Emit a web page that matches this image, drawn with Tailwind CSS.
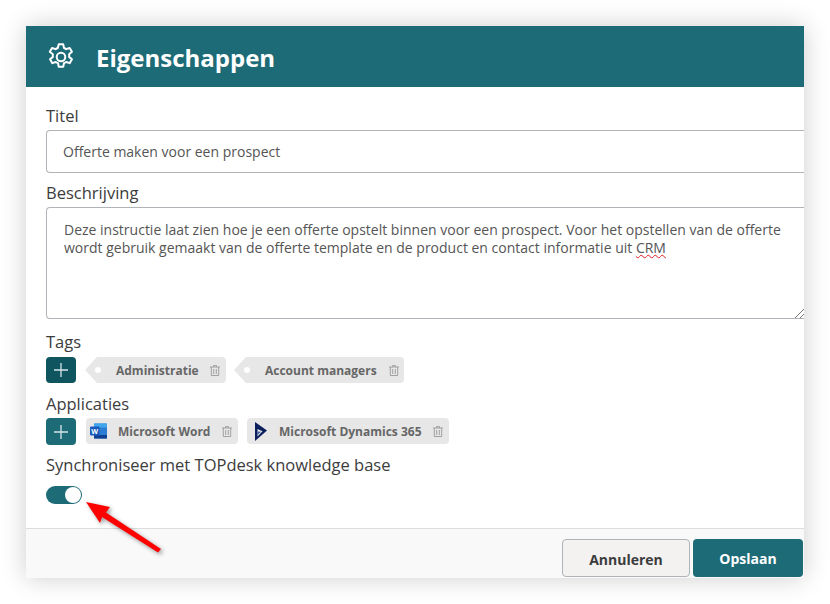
<!DOCTYPE html>
<html lang="en">
<head>
  <meta charset="UTF-8" />
  <title>Eigenschappen</title>
  <script src="https://cdn.jsdelivr.net/npm/@tailwindcss/browser@4"></script>
</head>
<body class="bg-white h-[604px] w-[830px] overflow-hidden relative font-['Open_Sans',sans-serif] text-[#3c3c3c]">
  <div class="absolute left-[26px] top-[26px] w-[778px] h-[552px] bg-white shadow-[0_0_24px_rgba(0,0,0,0.2)] flex flex-col overflow-hidden">
    <!-- header -->
    <div class="h-[61px] shrink-0 bg-[#1e6b78] flex items-center pl-[19px] text-white">
      <svg class="w-[32px] h-[32px]" viewBox="0 0 24 24" fill="none" stroke="currentColor" stroke-width="1.500" stroke-linecap="round" stroke-linejoin="round">
        <path d="M10.300 2.500h3.400l.5 2.700c.6.2 1.200.5 1.700.9l2.600-.9 1.700 2.900-2.100 1.800a7 7 0 0 1 0 2l2.100 1.800-1.700 2.900-2.600-.9c-.5.4-1.100.7-1.700.9l-.5 2.700h-3.400l-.5-2.700c-.6-.2-1.200-.5-1.700-.9l-2.600.9-1.700-2.900 2.100-1.800a7 7 0 0 1 0-2L3.600 8.100l1.700-2.900 2.600.9c.5-.4 1.100-.7 1.700-.9z" />
        <circle cx="12" cy="12" r="3.200" />
      </svg>
      <h1 class="ml-[19px] mt-[3px] text-[24px] font-bold leading-none">Eigenschappen</h1>
    </div>

    <!-- body -->
    <div class="flex-1 pl-[20px] pt-[17px]">
      <label class="block text-[16.500px] leading-[24px] h-[26px]">Titel</label>
      <div class="h-[43px] border border-[#b0b4b8] border-r-0 rounded-l-[4px] pl-[16px] flex items-center text-[14px] text-[#555]">Offerte maken voor een prospect</div>

      <label class="block text-[16.500px] leading-[24px] h-[26px] mt-[8px]">Beschrijving</label>
      <div class="relative h-[112px] border border-[#b0b4b8] border-r-0 rounded-l-[4px] pl-[17px] pr-[20px] pt-[13px] text-[14px] leading-[18px] text-[#555]">
        Deze instructie laat zien hoe je een offerte opstelt binnen voor een prospect. Voor het opstellen van de offerte wordt gebruik gemaakt van de offerte template en de product en contact informatie uit <span class="underline decoration-wavy decoration-[#e02020] decoration-1">CRM</span>
        <svg class="absolute right-0 bottom-0 w-[9px] h-[9px]" viewBox="0 0 9 9" stroke="#777" stroke-width="1"><path d="M0 9 9 0M5 9l4-4" /></svg>
      </div>

      <label class="block text-[16.500px] leading-[24px] h-[27px] mt-[11px]">Tags</label>
      <div class="flex items-center h-[26px]">
        <button class="w-[30px] h-[26px] rounded-[4px] bg-[#0f5560] flex items-center justify-center">
          <svg class="w-[14px] h-[14px]" viewBox="0 0 14 14" stroke="#d5e5e8" stroke-width="1.300"><path d="M7 0v14M0 7h14" /></svg>
        </button>
        <div class="ml-[9px] h-[26px] w-[141px] bg-[#e7e7e7] rounded-r-[4px] [clip-path:polygon(0_50%,12px_0,100%_0,100%_100%,12px_100%)] flex items-center pl-[10px] text-[12px] font-bold text-[#666]">
          <span class="w-[6px] h-[6px] rounded-full bg-white"></span>
          <span class="ml-[15px] mt-[1px]">Administratie</span>
          <svg class="ml-[11px] w-[10px] h-[11px]" viewBox="0 0 10 11" fill="none" stroke="#999" stroke-width="0.900"><path d="M0 2h10M3.500 2V.6h3V2M1.300 2v8.500h7.400V2M3.700 4v5M6.300 4v5" /></svg>
        </div>
        <div class="ml-[8px] h-[26px] w-[170px] bg-[#e7e7e7] rounded-r-[4px] [clip-path:polygon(0_50%,12px_0,100%_0,100%_100%,12px_100%)] flex items-center pl-[10px] text-[12px] font-bold text-[#666]">
          <span class="w-[6px] h-[6px] rounded-full bg-white"></span>
          <span class="ml-[15px] mt-[1px]">Account managers</span>
          <svg class="ml-[12px] w-[10px] h-[11px]" viewBox="0 0 10 11" fill="none" stroke="#999" stroke-width="0.900"><path d="M0 2h10M3.500 2V.6h3V2M1.300 2v8.500h7.400V2M3.700 4v5M6.300 4v5" /></svg>
        </div>
      </div>

      <label class="block text-[16.500px] leading-[22px] h-[25px] mt-[10px]">Applicaties</label>
      <div class="flex items-start h-[27px]">
        <button class="w-[30px] h-[27px] rounded-[4px] bg-[#1e6b78] flex items-center justify-center">
          <svg class="w-[14px] h-[14px]" viewBox="0 0 14 14" stroke="#d5e5e8" stroke-width="1.300"><path d="M7 0v14M0 7h14" /></svg>
        </button>
        <div class="ml-[10px] h-[26px] w-[152px] bg-[#e7e7e7] rounded-[4px] flex items-center pl-[4px] text-[12px] font-bold text-[#666]">
          <svg class="w-[17px] h-[16px]" viewBox="0 0 17 16">
            <rect x="4" y="0.500" width="13" height="15" rx="1" fill="#2b7cd3" />
            <rect x="4" y="0.500" width="13" height="4" fill="#41a5ee" />
            <rect x="4" y="8" width="13" height="4" fill="#2b7cd3" />
            <rect x="4" y="12" width="13" height="3.500" fill="#103f91" />
            <rect x="0" y="3.500" width="9.500" height="9" rx="1" fill="#185abd" />
            <text x="4.750" y="10.500" text-anchor="middle" font-size="7" font-weight="700" fill="#fff">W</text>
          </svg>
          <span class="ml-[11px] mt-[1px]">Microsoft Word</span>
          <svg class="ml-[12px] w-[10px] h-[11px]" viewBox="0 0 10 11" fill="none" stroke="#999" stroke-width="0.900"><path d="M0 2h10M3.500 2V.6h3V2M1.300 2v8.500h7.400V2M3.700 4v5M6.300 4v5" /></svg>
        </div>
        <div class="ml-[9px] h-[26px] w-[202px] bg-[#e7e7e7] rounded-[4px] flex items-center pl-[8px] text-[12px] font-bold text-[#666]">
          <svg class="w-[12px] h-[19px]" viewBox="0 0 12 19">
            <path d="M0 0 12 8.500 0 19z" fill="#0b1f5c" />
            <path d="M2.500 7 7.500 9.200 2.500 14.500z" fill="#e7e7e7" />
            <path d="M2.500 9.500 6 9.800 2.500 13z" fill="#3b5ba5" />
          </svg>
          <span class="ml-[12px] mt-[1px]">Microsoft Dynamics 365</span>
          <svg class="ml-[11px] w-[10px] h-[11px]" viewBox="0 0 10 11" fill="none" stroke="#999" stroke-width="0.900"><path d="M0 2h10M3.500 2V.6h3V2M1.300 2v8.500h7.400V2M3.700 4v5M6.300 4v5" /></svg>
        </div>
      </div>

      <label class="block text-[16.500px] leading-[24px] mt-[8px]">Synchroniseer met TOPdesk knowledge base</label>
      <div class="mt-[9px] w-[36px] h-[18px] rounded-full bg-[#1e6b78] relative">
        <span class="absolute right-[1px] top-[1px] w-[16px] h-[16px] rounded-full bg-white"></span>
      </div>
    </div>

    <!-- footer -->
    <div class="h-[50px] shrink-0 border-t border-[#dcdcdc] bg-[#f9f9f9] flex justify-end items-start pt-[10px] pr-px gap-[3px]">
      <button class="w-[128px] h-[38px] rounded-[4px] border border-[#b0b4b8] bg-[#f3f2f1] pt-[2px] text-[14px] font-bold text-[#3c3c3c]">Annuleren</button>
      <button class="w-[110px] h-[38px] rounded-[4px] bg-[#1e6b78] text-[14px] font-bold text-white">Opslaan</button>
    </div>
  </div>

  <!-- red arrow -->
  <svg class="absolute left-[80px] top-[495px] w-[90px] h-[65px] drop-shadow-[2px_2px_2px_rgba(0,0,0,0.4)]" viewBox="0 0 90 65" fill="#ff0000">
    <path d="M6 7 30 12 26 17.500 81 54 78 57.500 22 22 20 28z" />
  </svg>
</body>
</html>
